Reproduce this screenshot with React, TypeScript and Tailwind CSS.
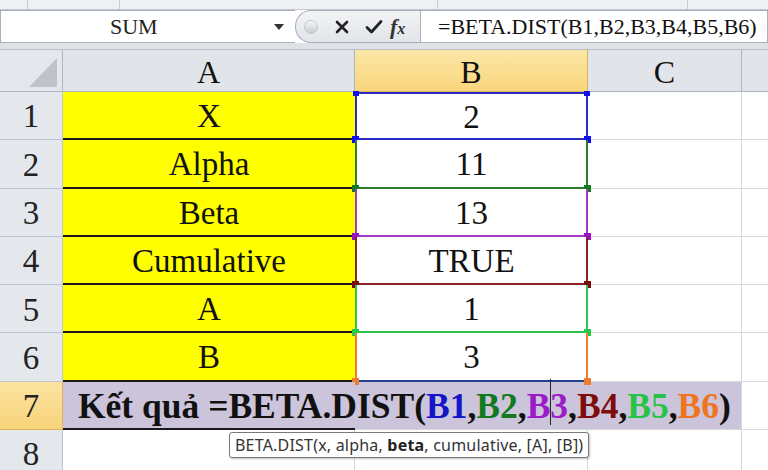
import React from "react";

const ROWS = [
  { n: 1, a: "X", b: "2", border: "border-[#2b2bc4]", handle: "bg-[#1010ee]", top: true },
  { n: 2, a: "Alpha", b: "11", border: "border-[#2a7d2a]", handle: "bg-[#137a1f]", top: false },
  { n: 3, a: "Beta", b: "13", border: "border-[#a23cc4]", handle: "bg-[#9a12c8]", top: false },
  { n: 4, a: "Cumulative", b: "TRUE", border: "border-[#8a2222]", handle: "bg-[#7d0d0d]", top: false },
  { n: 5, a: "A", b: "1", border: "border-[#34c052]", handle: "bg-[#22cc44]", top: false },
  { n: 6, a: "B", b: "3", border: "border-[#f07a30]", handle: "bg-[#ef7d2e]", top: false },
];

function RowHead({ n, active }: { n: number; active?: boolean }) {
  return (
    <div
      className={
        "flex items-center justify-center pt-[3px] border-r border-b font-['Liberation_Serif',serif] text-[33px] text-[#222] " +
        (active
          ? "bg-gradient-to-b from-[#fbe3a0] to-[#f8d47a] border-[#dcb35a]"
          : "bg-[#e4e7ec] border-[#bfc5cd]")
      }
    >
      {n}
    </div>
  );
}

function FormulaBar() {
  return (
    <div className="h-[33px] flex bg-white">
      <div className="w-[295px] flex items-center relative border-y border-l border-[#a9b0b9]">
        <span className="pl-[109px] font-['Liberation_Serif',serif] text-[22px] text-[#222]">SUM</span>
        <svg className="absolute left-[273px] top-[13px]" width="10" height="6" viewBox="0 0 10 6">
          <path d="M0 0 L10 0 L5 6 Z" fill="#333" />
        </svg>
      </div>
      <div className="w-[125px] flex items-center pl-[8px] rounded-l-[16px] border border-r-0 border-[#a9b0b9] bg-gradient-to-b from-[#f1f3f5] to-[#e2e5e9]">
        <div className="w-[14px] h-[14px] rounded-full bg-gradient-to-b from-[#f6f6f6] to-[#c8cbd0] border border-[#c2c6cc]" />
        <svg className="ml-[16px]" width="16" height="16" viewBox="0 0 16 16">
          <path d="M3 3 L13 13 M13 3 L3 13" stroke="#222" strokeWidth="2.6" strokeLinecap="round" />
        </svg>
        <svg className="ml-[15px]" width="18" height="16" viewBox="0 0 18 16">
          <path d="M2 8.5 L6.5 13 L16 2.5" stroke="#222" strokeWidth="2.8" fill="none" strokeLinecap="round" strokeLinejoin="round" />
        </svg>
        <span className="ml-[7px] font-['Liberation_Serif',serif] italic font-bold text-[22px] text-[#333] leading-none">
          f<span className="text-[16px]">x</span>
        </span>
      </div>
      <div className="flex-1 flex items-center pl-[17px] border border-[#a9b0b9] bg-white">
        <span className="font-['Liberation_Serif',serif] text-[22px] text-[#111] whitespace-nowrap">
          =BETA.DIST(B1,B2,B3,B4,B5,B6)
        </span>
      </div>
    </div>
  );
}

function Sheet() {
  const gray = "border-[#d6d9dd]";
  return (
    <div className="relative grid grid-cols-[63px_292px_233px_154px_1fr] grid-rows-[42px_repeat(8,48.3px)] font-['Liberation_Serif',serif] text-[33px] text-[#111]">
      {/* header row */}
      <div className="bg-[#e4e7ec] border-r border-b border-[#aeb5be] relative">
        <svg className="absolute left-[29px] top-[8px]" width="28" height="29" viewBox="0 0 28 29">
          <path d="M0 29 L28 0 L28 29 Z" fill="#bfc3c9" />
        </svg>
      </div>
      <div className="bg-[#e1e5ea] border-r border-b border-[#aeb5be] flex items-center justify-center pt-[3px] text-[32px]">A</div>
      <div className="bg-gradient-to-b from-[#fbe6a6] to-[#f9d67c] border-r border-b border-[#dcb35a] flex items-center justify-center pt-[3px] text-[32px]">B</div>
      <div className="bg-[#e1e5ea] border-r border-b border-[#aeb5be] flex items-center justify-center pt-[3px] text-[32px]">C</div>
      <div className="bg-[#e1e5ea] border-b border-[#aeb5be]" />

      {ROWS.map((r) => (
        <React.Fragment key={r.n}>
          <RowHead n={r.n} />
          <div className="bg-[#ffff00] border-b-2 border-[#1a1a1a] flex items-center justify-center pt-[3px]">{r.a}</div>
          <div
            className={
              "relative bg-white border-x-2 border-b-2 flex items-center justify-center pt-[3px] " +
              r.border +
              (r.top ? " border-t-2" : "") +
              (r.n === 6 ? " border-b-[#24418f]" : "")
            }
          >
            {r.b}
            {r.top && (
              <>
                <span className={"absolute -top-[3px] -left-[4px] w-[6px] h-[5px] " + r.handle} />
                <span className={"absolute -top-[3px] -right-[4px] w-[6px] h-[5px] " + r.handle} />
              </>
            )}
            <span className={"absolute -bottom-[5px] -left-[5px] w-[7px] h-[7px] " + r.handle} />
            <span className={"absolute -bottom-[5px] -right-[5px] w-[7px] h-[7px] " + r.handle} />
          </div>
          <div className={"bg-white border-r border-b " + gray} />
          <div className={"bg-white border-b " + gray} />
        </React.Fragment>
      ))}

      {/* row 7 */}
      <RowHead n={7} active />
      <div className="relative z-10 bg-[#ccc4da] border-b-2 border-[#1a1a1a] flex items-center pl-[15px] pt-[3px] overflow-visible">
        <span className="whitespace-nowrap font-bold text-[35.5px] text-[#111] leading-none">
          Kết quả =BETA.DIST(
          <span className="text-[#1414c8]">B1</span>,
          <span className="text-[#127a1c]">B2</span>,
          <span className="text-[#9a1cc8]">
            B
            <span className="relative">
              3
              <span className="absolute left-0 -top-[7px] h-[46px] border-l border-[#222]" />
            </span>
          </span>
          ,<span className="text-[#7d0d0d]">B4</span>,
          <span className="text-[#25c447]">B5</span>,
          <span className="text-[#f07420]">B6</span>)
        </span>
      </div>
      <div className={"bg-[#ccc4da] border-b " + gray} />
      <div className={"bg-[#ccc4da] border-r border-b " + gray} />
      <div className={"bg-white border-b " + gray} />

      {/* row 8 */}
      <RowHead n={8} />
      <div className={"bg-white border-r border-b " + gray} />
      <div className={"bg-white border-r border-b " + gray} />
      <div className={"bg-white border-r border-b " + gray} />
      <div className={"bg-white border-b " + gray} />

      {/* function tooltip */}
      <div className="absolute z-20 left-[229px] top-[382px] h-[26px] px-[5px] flex items-center rounded-[3px] border border-[#7a7a7a] bg-white shadow-[1px_1px_2px_rgba(0,0,0,0.25)] font-['Noto_Sans',sans-serif] text-[16px] tracking-[0.2px] text-[#333] whitespace-nowrap">
        <span>
          BETA.DIST(x, alpha, <b className="font-bold text-[#222]">beta</b>, cumulative, [A], [B])
        </span>
      </div>
    </div>
  );
}

export default function App() {
  return (
    <div className="w-[768px] h-[470px] overflow-hidden bg-white">
      <div className="h-[10px] bg-[#eef0f3] border-b border-[#c3c8cf] flex">
        <div className="w-[28px] border-r border-[#c9ced5]" />
        <div className="w-[92px] border-r border-[#c9ced5]" />
        <div className="w-[318px] border-r border-[#c9ced5]" />
        <div className="w-[250px] border-r border-[#c9ced5]" />
      </div>
      <FormulaBar />
      <div className="h-[7px] bg-[#dfe3e8] border-b border-[#b9bfc7]" />
      <Sheet />
    </div>
  );
}
